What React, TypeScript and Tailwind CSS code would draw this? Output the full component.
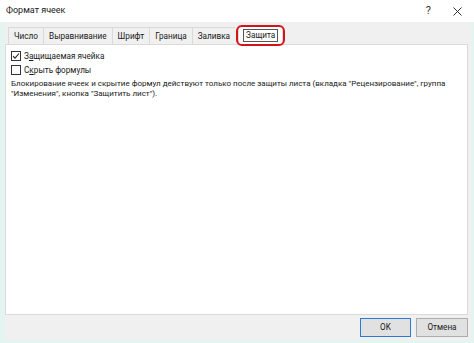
const tabs = ['Число', 'Выравнивание', 'Шрифт', 'Граница', 'Заливка'];

const Check = ({ checked }: { checked: boolean }) => (
  <span className="w-[10px] h-[10px] border border-[#333] bg-white flex items-center justify-center">
    {checked && (
      <svg width="8" height="8" viewBox="0 0 8 8">
        <path d="M1 4.2 L3 6.2 L7 1.5" stroke="#222" strokeWidth="1.1" fill="none" />
      </svg>
    )}
  </span>
);

const App = () => {
  return (
    <div
      className="w-[474px] h-[343px] bg-[#e4f4f1] pl-[5px] pr-[3px] pb-[3px] flex flex-col text-[8.2px] text-[#1a1a1a]"
      style={{ fontFamily: 'Roboto, "Noto Sans", sans-serif' }}
    >
      {/* title bar */}
      <div className="h-[22px] bg-white -ml-[5px] -mr-[3px] pl-[6px] pr-[12px] flex items-center shrink-0">
        <span className="flex-1 text-[9px]">Формат ячеек</span>
        <span className="text-[11px] text-[#333] mr-[22px]">?</span>
        <svg width="9" height="9" viewBox="0 0 9 9">
          <path d="M0.5 0.5 L8.5 8.5 M8.5 0.5 L0.5 8.5" stroke="#333" strokeWidth="1" />
        </svg>
      </div>

      <div className="flex-1 bg-[#f0f0f0] flex flex-col pr-[3px]">
        {/* tabs */}
        <div className="flex items-end h-[22px] pl-[3px] shrink-0">
          {tabs.map((t) => (
            <div
              key={t}
              className="h-[17px] px-[5px] flex items-center border-t border-l border-[#dadada] bg-[#f0f0f0]"
            >
              {t}
            </div>
          ))}
          <div className="relative h-[19px] px-[4px] flex items-center border-x border-t border-[#dadada] bg-white ml-[3px]">
            <span className="border border-[#555] px-[2px] leading-[11px]">Защита</span>
            <span className="absolute -left-[3px] -right-[3px] -top-[1px] -bottom-[2px] border-2 border-[#d4141a] rounded-[6px]" />
          </div>
        </div>

        {/* panel */}
        <div className="h-[271px] bg-white border border-[#dadada] pl-[5px] pt-[4px] flex flex-col">
          <label className="flex items-center gap-[3px] h-[14px]">
            <Check checked />
            <span>
              З<span className="underline">а</span>щищаемая ячейка
            </span>
          </label>
          <label className="flex items-center gap-[3px] h-[14px]">
            <Check checked={false} />
            <span>
              С<span className="underline">к</span>рыть формулы
            </span>
          </label>
          <p className="mt-[2px] leading-[10px] text-[8px]">
            Блокирование ячеек и скрытие формул действуют только после защиты листа (вкладка "Рецензирование", группа
            <br />
            "Изменения", кнопка "Защитить лист").
          </p>
        </div>

        {/* buttons */}
        <div className="flex-1 flex justify-end items-center gap-[5px]">
          <button className="w-[51px] h-[19px] bg-[#e1e1e1] border border-[#2d7ad6]">OK</button>
          <button className="w-[52px] h-[19px] bg-[#e1e1e1] border border-[#adadad]">Отмена</button>
        </div>
      </div>
    </div>
  );
};

export default App;
